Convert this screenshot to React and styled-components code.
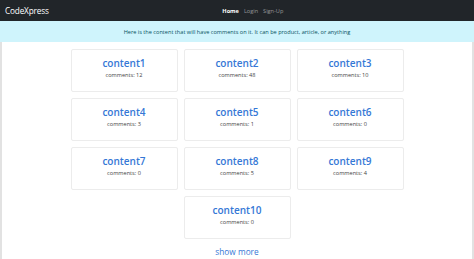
import styled, { createGlobalStyle } from "styled-components";

const Global = createGlobalStyle`
  html, body {
    margin: 0;
    padding: 0;
    background: #fff;
    font-family: "Open Sans", "Noto Sans", sans-serif;
  }
`;

const Page = styled.div`
  width: 474px;
  height: 259px;
  overflow: hidden;
  display: flex;
  flex-direction: column;
`;

const Navbar = styled.nav`
  height: 21px;
  background: #212529;
  display: flex;
  align-items: center;
  padding: 0 5px;
  flex-shrink: 0;
`;

const Brand = styled.div`
  color: #fff;
  font-size: 8.2px;
  letter-spacing: -0.15px;
`;

const Links = styled.div`
  flex: 1;
  display: flex;
  justify-content: center;
  gap: 5px;
  font-size: 5.6px;
  margin-right: 12px;
`;

const NavLink = styled.span`
  color: ${(p) => (p.$active ? "#fff" : "rgba(255,255,255,0.5)")};
  font-weight: ${(p) => (p.$active ? 700 : 400)};
`;

const Body = styled.div`
  flex: 1;
  display: flex;
  flex-direction: column;
  border-left: 2px solid #e2e2e2;
  border-right: 2px solid #e2e2e2;
`;

const Alert = styled.div`
  height: 21px;
  background: #cff4fc;
  color: #055160;
  font-size: 5.6px;
  display: flex;
  align-items: center;
  justify-content: center;
  margin: 0 -2px;
`;

const Grid = styled.div`
  margin: 7px auto 0;
  display: grid;
  grid-template-columns: repeat(3, 107px);
  gap: 6px;
  width: 333px;
`;

const Card = styled.div`
  height: 43px;
  box-sizing: border-box;
  border: 1px solid #ececec;
  border-radius: 2px;
  display: flex;
  flex-direction: column;
  align-items: center;
  padding-top: 6px;
  grid-column: ${(p) => p.$col || "auto"};
`;

const Title = styled.div`
  color: #3578d6;
  font-size: 10px;
  font-weight: 600;
  line-height: 14px;
`;

const Count = styled.div`
  color: #444;
  font-size: 5.6px;
  line-height: 8px;
  margin-top: 1px;
`;

const More = styled.div`
  text-align: center;
  color: #3578d6;
  font-size: 8.3px;
  margin-top: 7px;
`;

const items = [
  ["content1", 12],
  ["content2", 48],
  ["content3", 10],
  ["content4", 3],
  ["content5", 1],
  ["content6", 0],
  ["content7", 0],
  ["content8", 5],
  ["content9", 4],
  ["content10", 0],
];

export default function App() {
  return (
    <Page>
      <Global />
      <Navbar>
        <Brand>CodeXpress</Brand>
        <Links>
          <NavLink $active>Home</NavLink>
          <NavLink>Login</NavLink>
          <NavLink>Sign-Up</NavLink>
        </Links>
      </Navbar>
      <Body>
        <Alert>
          Here is the content that will have comments on it. It can be product, article, or anything
        </Alert>
        <Grid>
          {items.map(([name, n], i) => (
            <Card key={name} $col={i === 9 ? "2" : undefined}>
              <Title>{name}</Title>
              <Count>comments: {n}</Count>
            </Card>
          ))}
        </Grid>
        <More>show more</More>
      </Body>
    </Page>
  );
}
